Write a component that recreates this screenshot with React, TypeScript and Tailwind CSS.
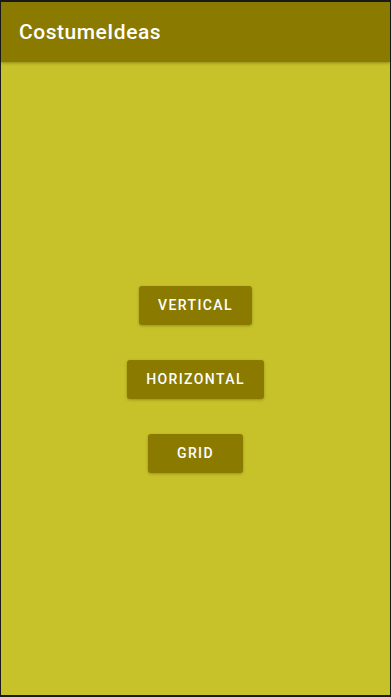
import React from 'react';

const buttons = ['VERTICAL', 'HORIZONTAL', 'GRID'];

const App = () => {
  return (
    <div className="w-[391px] h-[697px] bg-[#1b1b1b] pt-[2px] pb-[2px] pl-[1px] pr-[1px]" style={{ fontFamily: 'Roboto, "Liberation Sans", sans-serif' }}>
      <div className="flex flex-col h-full bg-[#c7c229]">
        {/* App bar */}
        <div className="h-[60px] bg-[#8a7a00] flex items-center pl-[18px] pt-[2px] shadow-[0_1px_3px_rgba(0,0,0,0.3)] relative z-10">
          <span className="text-white text-[21px] font-medium tracking-[0.025em]">CostumeIdeas</span>
        </div>

        {/* Buttons */}
        <div className="flex-1 flex flex-col items-center justify-center gap-[35px] pt-[1px]">
          {buttons.map((label) => (
            <button
              key={label}
              className="h-[39px] min-w-[95px] px-[19px] pt-[1px] rounded-[3px] bg-[#8a7a00] text-white text-[14px] font-medium tracking-[0.1em] shadow-[0_1px_3px_rgba(0,0,0,0.25)]"
            >
              {label}
            </button>
          ))}
        </div>
      </div>
    </div>
  );
};

export default App;
